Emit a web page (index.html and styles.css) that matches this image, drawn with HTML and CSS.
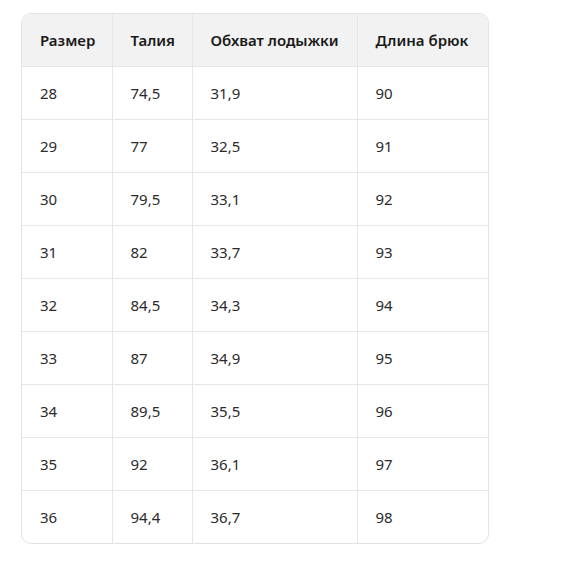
FILE: index.html
```html
<!DOCTYPE html>
<html lang="ru">
<head>
  <meta charset="UTF-8" />
  <title>Размеры</title>
  <link rel="stylesheet" href="styles.css">
</head>
<body>
  <div class="table-wrap">
    <table class="sizes">
      <colgroup>
        <col class="c-size">
        <col class="c-waist">
        <col class="c-ankle">
        <col class="c-length">
      </colgroup>
      <thead>
        <tr>
          <th>Размер</th>
          <th>Талия</th>
          <th>Обхват лодыжки</th>
          <th>Длина брюк</th>
        </tr>
      </thead>
      <tbody>
        <tr><td>28</td><td>74,5</td><td>31,9</td><td>90</td></tr>
        <tr><td>29</td><td>77</td><td>32,5</td><td>91</td></tr>
        <tr><td>30</td><td>79,5</td><td>33,1</td><td>92</td></tr>
        <tr><td>31</td><td>82</td><td>33,7</td><td>93</td></tr>
        <tr><td>32</td><td>84,5</td><td>34,3</td><td>94</td></tr>
        <tr><td>33</td><td>87</td><td>34,9</td><td>95</td></tr>
        <tr><td>34</td><td>89,5</td><td>35,5</td><td>96</td></tr>
        <tr><td>35</td><td>92</td><td>36,1</td><td>97</td></tr>
        <tr><td>36</td><td>94,4</td><td>36,7</td><td>98</td></tr>
      </tbody>
    </table>
  </div>
</body>
</html>
```

FILE: styles.css
```css
body {
  margin: 0;
  padding: 13px 0 0 21px;
  background: #fff;
  font-family: "Noto Sans", "Open Sans", sans-serif;
  color: #222;
}

.table-wrap {
  width: 466px;
  border: 1px solid #e3e3e3;
  border-radius: 10px;
  overflow: hidden;
}

.sizes {
  width: 100%;
  border-collapse: collapse;
  table-layout: fixed;
  font-size: 15px;
}

.c-size { width: 90px; }
.c-waist { width: 80px; }
.c-ankle { width: 165px; }
.c-length { width: 131px; }

.sizes th,
.sizes td {
  height: 53px;
  padding: 0 0 0 18px;
  text-align: left;
  border-right: 1px solid #e6e6e6;
  border-bottom: 1px solid #e6e6e6;
  box-sizing: border-box;
}

.sizes th:last-child,
.sizes td:last-child {
  border-right: none;
}

.sizes tbody tr:last-child td {
  border-bottom: none;
}

.sizes th {
  height: 52px;
  background: #f2f2f2;
  font-weight: 600;
  color: #1a1a1a;
}

.sizes td {
  font-weight: 400;
  color: #2b2b2b;
}
```
